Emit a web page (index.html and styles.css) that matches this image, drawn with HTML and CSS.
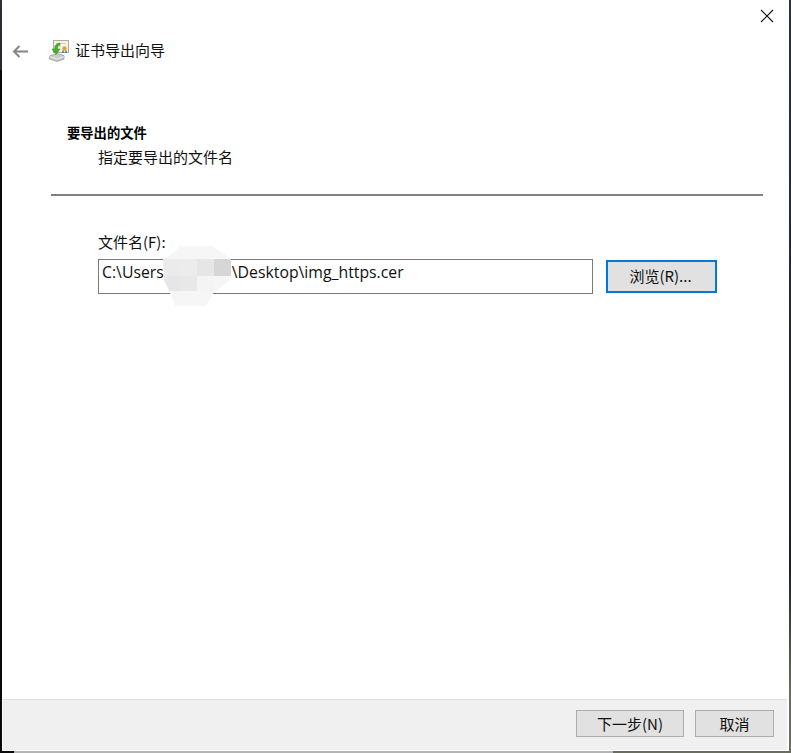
FILE: index.html
```html
<!DOCTYPE html>
<html lang="zh-CN">
<head>
  <meta charset="UTF-8">
  <title>证书导出向导</title>
  <link rel="stylesheet" href="styles.css">
</head>
<body>
  <div class="window">
    <div class="close-row">
      <svg class="close-icon" width="14" height="14" viewBox="0 0 14 14">
        <path d="M1 1 L13 13 M13 1 L1 13" stroke="#111" stroke-width="1.1" fill="none"/>
      </svg>
    </div>
    <div class="title-row">
      <svg class="back-icon" width="17" height="13" viewBox="0 0 17 13">
        <path d="M16 6.5 H2 M7.5 1 L2 6.5 L7.5 12" stroke="#868686" stroke-width="2" fill="none"/>
      </svg>
      <svg class="wizard-icon" width="22" height="22" viewBox="0 0 22 22">
        <rect x="5.5" y="0.5" width="15" height="12" fill="#f6f1e6" stroke="#b5aa92"/>
        <path d="M8 3.5 H18 M8 6 H13" stroke="#d8cfbb"/>
        <circle cx="16.5" cy="8.5" r="2.2" fill="#e2a12c"/>
        <path d="M15 10.5 L15 13 M18 10.5 L18 13" stroke="#3f78c9" stroke-width="1.6"/>
        <path d="M1.5 16 L9 13.5 L16 15.5 L16 19 L9 21.5 L1.5 19 Z" fill="#c9cccc" stroke="#8b8f8f" stroke-width="0.7"/>
        <path d="M1.5 16.5 L9 19 L16 16.5" fill="none" stroke="#f1f2f2" stroke-width="0.8"/>
        <path d="M12 3 C7.5 3.5 6.5 6.5 6.8 9 L4 9 L8 14.5 L12 9 L9.5 9 C9.3 7 10 5.5 12 5 Z" fill="#4cae2e" stroke="#2e8a1c" stroke-width="0.5"/>
      </svg>
      <span class="wizard-title">证书导出向导</span>
    </div>
    <div class="section-head">
      <div class="section-title">要导出的文件</div>
      <div class="section-sub">指定要导出的文件名</div>
    </div>
    <div class="rule"></div>
    <div class="file-form">
      <label class="file-label" for="file">文件名(F):</label>
      <div class="file-row">
        <div class="file-input" id="file">C:\Users<span class="hidden-part"></span>\Desktop\img_https.cer</div>
        <button class="btn btn-browse" type="button">浏览(R)...</button>
      </div>
      <div class="mosaic">
        <i class="m1"></i><i class="m2"></i><i class="m3"></i><i class="m4"></i>
        <i class="m5"></i><i class="m6"></i><i class="m7"></i><i class="m8"></i>
      </div>
    </div>
    <div class="footer">
      <button class="btn btn-next" type="button">下一步(N)</button>
      <button class="btn btn-cancel" type="button">取消</button>
    </div>
  </div>
</body>
</html>
```

FILE: styles.css
```css
* {
  box-sizing: border-box;
}
html, body {
  height: 100%;
}
body {
  margin: 0;
  height: 753px;
  padding: 0 2px 2px 2px;
  overflow: hidden;
  display: flex;
  font-family: "Noto Sans CJK SC", "Open Sans", sans-serif;
  color: #111;
  background:
    linear-gradient(to right, #0a0a0a 0, #0a0a0a 14px, #b4b4b4 14px, #b4b4b4 613px, #6b6e5f 613px) bottom / 100% 2px no-repeat,
    linear-gradient(to bottom, #2c3338 0, #1b2024 75%, #6b6e5f 92%) right / 2px 100% no-repeat,
    linear-gradient(to bottom, #2c3035 0, #24272b 70px, #0a0a0a 70px) left / 2px 100% no-repeat,
    #111;
}
.window {
  flex: 1;
  display: flex;
  flex-direction: column;
  background: #fff;
  border-left: 1px solid #fff;
  border-right: 2px solid #fff;
  border-bottom: 1px solid #fff;
}
.close-row {
  display: flex;
  justify-content: flex-end;
  height: 39px;
  padding: 9px 13px 0 0;
}
.close-icon {
  display: block;
}
.title-row {
  display: flex;
  align-items: center;
  height: 22px;
  padding-left: 9px;
}
.back-icon {
  margin: 2px 19px 0 0;
}
.wizard-icon {
  margin: 2px 5px 0 0;
}
.wizard-title {
  font-size: 15px;
  line-height: 20px;
}
.section-head {
  padding: 62px 0 0 64px;
}
.section-title {
  font-size: 13.3px;
  font-weight: bold;
  line-height: 20px;
  color: #000;
}
.section-sub {
  padding: 4px 0 0 31px;
  font-size: 15px;
  line-height: 20px;
}
.rule {
  height: 2px;
  margin: 27px 24px 0 48px;
  background: #808080;
}
.file-form {
  position: relative;
  flex: 1;
  padding: 36px 0 0 95px;
}
.file-label {
  display: block;
  font-size: 15px;
  line-height: 20px;
  margin-bottom: 7px;
}
.file-row {
  display: flex;
  align-items: center;
}
.file-input {
  width: 495px;
  height: 35px;
  padding: 0 0 0 3px;
  border: 1px solid #7a7a7a;
  font-family: "Open Sans", "Noto Sans CJK SC", sans-serif;
  font-size: 15.8px;
  line-height: 24px;
  white-space: nowrap;
}
.hidden-part {
  display: inline-block;
  width: 68px;
}
.btn {
  height: 27px;
  padding: 0;
  border: 1px solid #adadad;
  background: #e1e1e1;
  color: #111;
  font-family: "Noto Sans CJK SC", "Open Sans", sans-serif;
  font-size: 15px;
}
.btn-browse {
  width: 111px;
  height: 33px;
  margin-left: 13px;
  padding: 0 2px 2px 0;
  border: 2px solid #0078d7;
}
.footer {
  display: flex;
  justify-content: flex-end;
  gap: 11px;
  height: 51px;
  padding: 10px 13px 0 0;
  background: #f0f0f0;
  border-top: 1px solid #dfdfdf;
}
.btn-next {
  width: 108px;
}
.btn-cancel {
  width: 79px;
}
/* smudge over the user name */
.mosaic {
  position: absolute;
  left: 160px;
  top: 50px;
  width: 68px;
  height: 60px;
  background: #f6f6f6;
  clip-path: polygon(25% 0, 72% 0, 88% 12%, 100% 22%, 100% 55%, 82% 72%, 74% 78%, 64% 100%, 18% 100%, 8% 72%, 2% 58%, 0 22%, 14% 12%);
  display: grid;
  grid-template-columns: repeat(4, 1fr);
  grid-template-rows: 13px 17px 15px 15px;
}
.mosaic i {
  display: block;
}
.m1 { grid-row: 2; background: #ebebeb; }
.m2 { grid-row: 2; background: #ececec; }
.m3 { grid-row: 2; background: #e6e6e6; }
.m4 { grid-row: 2; background: #d6d6d6; }
.m5 { grid-row: 3; background: #e6e6e6; }
.m6 { grid-row: 3; background: #e8e8e8; }
.m7 { grid-row: 3; background: #f4f4f4; }
.m8 { grid-row: 3; background: #f6f6f6; }
```
